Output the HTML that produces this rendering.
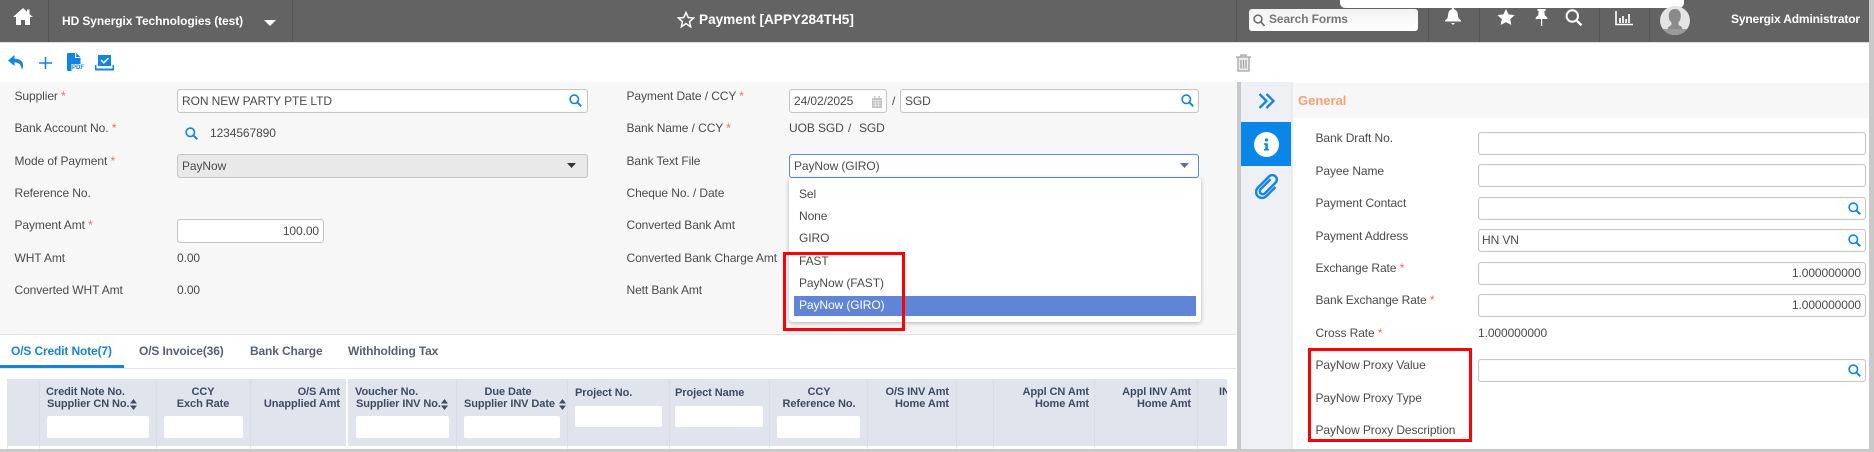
<!DOCTYPE html>
<html><head><meta charset="utf-8"><title>Payment</title>
<style>
html,body{margin:0;padding:0;width:1874px;height:452px;overflow:hidden;background:#fff}
#p{position:relative;width:1874px;height:452px;overflow:hidden;font:12px/14px "Liberation Sans",Arial,sans-serif;color:#4a4a4a;filter:blur(.35px);letter-spacing:-.09px}
#p div,#p svg,#p span.a{position:absolute}
.t{white-space:nowrap;height:14px}
.r{color:#f26a6a}
.i{background:#fff;border:1px solid #c6c6c6;border-radius:3px;box-sizing:border-box;box-shadow:inset 0 0 1px #ddd}
.b{font-weight:bold}
.w{color:#fff;font-weight:bold}
.h{font-weight:bold;font-size:11px;letter-spacing:-.08px;color:#3f4b63;white-space:nowrap;height:14px}
.c{text-align:center;transform:translateX(-50%)}
.e{transform:translateX(-100%)}
.f{background:#fff;border-radius:2px}
.v{background:#d9dde6;width:1px;top:379px;height:67px}
.u{background:#e6e8ee;width:1px;top:446px;height:3px}
.s{width:1px;background:#565656;top:0;height:42px}
.red{border:3px solid #f00;box-sizing:border-box}
</style></head><body><div id="p">

<!-- top bar -->
<div style="left:0;top:0;width:1869px;height:42px;background:#636363"></div>
<div style="left:0;top:42px;width:1869px;height:1px;background:#dcdcdc"></div>
<div class="s" style="left:48px"></div><div class="s" style="left:292px"></div><div class="s" style="left:1236px"></div>
<div class="s" style="left:1428px"></div><div class="s" style="left:1479px"></div><div class="s" style="left:1599px"></div><div class="s" style="left:1649px"></div>

<svg style="left:13px;top:8px" width="20" height="17" viewBox="0 0 20 17"><path d="M10 0L0 9h3v8h5v-5h4v5h5V9h3l-3.500-3V1.500h-2.500v2.300z" fill="#fff"/></svg>
<div class="t w" style="left:62px;top:14px">HD Synergix Technologies (test)</div>
<svg style="left:264px;top:20px" width="12" height="6"><path d="M0 0h12L6 6z" fill="#fff"/></svg>

<svg style="left:677px;top:11px" width="18" height="17" viewBox="0 0 24 23"><path d="M12 2l3 6.800 7.300.7-5.500 4.900 1.600 7.200L12 17l-6.400 4.600 1.600-7.200L1.700 9.500 9 8.800z" fill="none" stroke="#fff" stroke-width="2"/></svg>
<div class="t w" style="left:699px;top:13px;font-size:13.600px;letter-spacing:0">Payment [APPY284TH5]</div>

<div style="left:1340px;top:-5px;width:344px;height:13px;background:#fff;border-radius:5px"></div>
<div style="left:1249px;top:9px;width:169px;height:22px;background:linear-gradient(#f2f2f2,#fff);border-radius:3px"></div>
<svg style="left:1253px;top:14px" width="12" height="13" viewBox="0 0 12 13"><circle cx="5" cy="5" r="3.900" fill="none" stroke="#666" stroke-width="1.500"/><path d="M8 8l3.500 4" stroke="#666" stroke-width="1.700"/></svg>
<div class="t b" style="left:1269px;top:12px;color:#777;letter-spacing:-.1px">Search Forms</div>

<svg style="left:1445px;top:8px" width="16" height="17" viewBox="0 0 16 17"><path d="M8 0c1 0 1.300.6 1.300 1.400C12 2.200 12.800 4.500 13 8c.1 2 1.500 3.500 3 4.500v1H0v-1c1.500-1 2.900-2.500 3-4.500.2-3.500 1-5.800 3.700-6.600C6.700.6 7 0 8 0z" fill="#fff"/><path d="M6 15h4l-2 2z" fill="#fff"/></svg>
<svg style="left:1497px;top:9px" width="18" height="16" viewBox="0 0 18 16"><path d="M9 0l2.600 5.400 6 .7-4.400 4 1.200 5.900L9 13.100 3.600 16l1.200-5.900L.4 6.100l6-.7z" fill="#fff"/></svg>
<svg style="left:1535px;top:9px" width="13" height="17" viewBox="0 0 13 17"><path d="M2.500 0h8v2H9.300l.5 4.500c1.500.8 2.700 2 2.700 3.500H.5c0-1.500 1.200-2.700 2.700-3.500L3.700 2H2.500z" fill="#fff"/><path d="M6 10h1.200v7H6z" fill="#fff"/></svg>
<svg style="left:1565px;top:9px" width="18" height="17" viewBox="0 0 18 17"><circle cx="7.300" cy="7" r="5.700" fill="none" stroke="#fff" stroke-width="2"/><path d="M11.500 11.300l5 5" stroke="#fff" stroke-width="2.400"/></svg>
<svg style="left:1615px;top:11px" width="18" height="15" viewBox="0 0 18 15"><path d="M1 0v13.500h17" fill="none" stroke="#fff" stroke-width="1.600"/><path d="M4 7h2v5H4zM7 5h2v7H7zM10 8h2v4h-2zM13 3h2v9h-2z" fill="#e8e8e8"/></svg>
<svg style="left:1660px;top:6px" width="30" height="29" viewBox="0 0 30 29"><defs><clipPath id="av"><ellipse cx="15" cy="14.500" rx="15" ry="14.500"/></clipPath></defs><ellipse cx="15" cy="14.500" rx="15" ry="14.500" fill="#e4e4e4"/><g clip-path="url(#av)"><path d="M15 3c4 0 5.800 3 5.800 7 0 3-1 5-2.300 6.500v2.500c2 1 3 2 4 3 -1 3-14 3-15 0 1-1 2-2 4-3v-2.500C9.700 15 8.700 13 8.700 10 8.700 6 11 3 15 3z" fill="#8a8a8a"/><path d="M0 23h30v6H0z" fill="#9a9a9a"/></g></svg>
<div class="t w" style="left:1731px;top:12px;letter-spacing:-.15px">Synergix Administrator</div>

<!-- toolbar -->
<svg style="left:7px;top:54px" width="18" height="17" viewBox="0 0 18 17"><path d="M7.500 1L1 6.500 7.500 12V8.400c4 0 6.500 1.500 7.500 7.600 2.500-5.500 1-11-7.500-11.400z" fill="#1383e4"/></svg>
<svg style="left:39px;top:57px" width="13" height="12"><path d="M5.700 0h1.600v5.200H13v1.600H7.300V12H5.700V6.800H0V5.200h5.700z" fill="#1383e4"/></svg>
<svg style="left:67px;top:53px" width="14" height="18" viewBox="0 0 14 18"><path d="M0 1q0-1 1-1h7v5h5.500v6H4.500v7H1q-1 0-1-1z" fill="#1383e4"/><path d="M9.200 0l4.300 4H9.200z" fill="#1383e4"/></svg>
<div class="t" style="left:72px;top:65px;font-size:6px;line-height:7px;height:7px;font-weight:bold;color:#1383e4;letter-spacing:0">PDF</div>
<svg style="left:95px;top:55px" width="19" height="16" viewBox="0 0 19 16"><path d="M3 0h13v11H3z" fill="#1383e4"/><path d="M6 5l2.800 2.800L13.500 3" fill="none" stroke="#fff" stroke-width="1.500"/><path d="M0 10v5.500h19V10h-1.500v3.500h-16V10z" fill="#1383e4"/></svg>
<svg style="left:1236px;top:54px" width="15" height="18" viewBox="0 0 15 18"><path d="M5 2.500V1h5v1.500M0 3h15M2 3.500V17h11V3.500M5 6v8.500M7.500 6v8.500M10 6v8.500" fill="#ececec" stroke="#a4a4a4" stroke-width="1.300"/></svg>

<!-- left form -->
<div style="left:0;top:82px;width:1237px;height:252px;background:#f7f7f7"></div>
<div style="left:0;top:334px;width:1237px;height:1px;background:#e3e3e3"></div>

<div class="t" style="left:14.500px;top:89px">Supplier <span class="r">*</span></div>
<div class="t" style="left:14.500px;top:121px">Bank Account No. <span class="r">*</span></div>
<div class="t" style="left:14.500px;top:154px">Mode of Payment <span class="r">*</span></div>
<div class="t" style="left:14.500px;top:186px">Reference No.</div>
<div class="t" style="left:14.500px;top:218px">Payment Amt <span class="r">*</span></div>
<div class="t" style="left:14.500px;top:251px">WHT Amt</div>
<div class="t" style="left:14.500px;top:283px">Converted WHT Amt</div>

<div class="i" style="left:177px;top:89px;width:411px;height:24px"></div>
<div class="t" style="left:182px;top:94px">RON NEW PARTY PTE LTD</div>
<svg style="left:569px;top:94px" width="13" height="13" viewBox="0 0 13 13"><circle cx="5.300" cy="5.300" r="4.200" fill="none" stroke="#1383e4" stroke-width="1.600"/><path d="M8.300 8.300l4 4" stroke="#1383e4" stroke-width="1.900"/></svg>
<svg style="left:185px;top:127px" width="13" height="13" viewBox="0 0 13 13"><circle cx="5.300" cy="5.300" r="4.200" fill="none" stroke="#1383e4" stroke-width="1.600"/><path d="M8.300 8.300l4 4" stroke="#1383e4" stroke-width="1.900"/></svg>
<div class="t" style="left:210px;top:126px">1234567890</div>

<div class="i" style="left:177px;top:154px;width:411px;height:24px;background:#e9e9e9"></div>
<div class="t" style="left:182px;top:159px">PayNow</div>
<svg style="left:567px;top:163px" width="9" height="5"><path d="M0 0h9L4.500 5z" fill="#333"/></svg>

<div class="i" style="left:177px;top:219px;width:147px;height:24px"></div>
<div class="t e" style="left:319px;top:224px">100.00</div>
<div class="t" style="left:177px;top:251px">0.00</div>
<div class="t" style="left:177px;top:283px">0.00</div>

<div class="t" style="left:626.500px;top:89px">Payment Date / CCY <span class="r">*</span></div>
<div class="t" style="left:626.500px;top:121px">Bank Name / CCY <span class="r">*</span></div>
<div class="t" style="left:626.500px;top:154px">Bank Text File</div>
<div class="t" style="left:626.500px;top:186px">Cheque No. / Date</div>
<div class="t" style="left:626.500px;top:218px">Converted Bank Amt</div>
<div class="t" style="left:626.500px;top:251px">Converted Bank Charge Amt</div>
<div class="t" style="left:626.500px;top:283px">Nett Bank Amt</div>

<div class="i" style="left:789px;top:89px;width:98px;height:24px"></div>
<div class="t" style="left:794px;top:94px">24/02/2025</div>
<svg style="left:872px;top:96px" width="10" height="12" viewBox="0 0 10 12"><path d="M0 2h10v10H0z" fill="#c4c4c4"/><path d="M2 0h1.500v2H2zM6.500 0H8v2H6.500z" fill="#c4c4c4"/><path d="M1 4.500h8M1 7h8M1 9.500h8M3.300 4v7M6.600 4v7" stroke="#e6e6e6" stroke-width=".7"/></svg>
<div class="t" style="left:892px;top:94px">/</div>
<div class="i" style="left:900px;top:89px;width:299px;height:24px"></div>
<div class="t" style="left:905px;top:94px">SGD</div>
<svg style="left:1181px;top:94px" width="13" height="13" viewBox="0 0 13 13"><circle cx="5.300" cy="5.300" r="4.200" fill="none" stroke="#1383e4" stroke-width="1.600"/><path d="M8.300 8.300l4 4" stroke="#1383e4" stroke-width="1.900"/></svg>
<div class="t" style="left:789px;top:121px">UOB SGD</div>
<div class="t" style="left:848px;top:121px">/</div>
<div class="t" style="left:859px;top:121px">SGD</div>

<div class="i" style="left:789px;top:154px;width:410px;height:24px;border-color:#5d8fd2"></div>
<div class="t" style="left:794px;top:159px">PayNow (GIRO)</div>
<svg style="left:1180px;top:163px" width="9" height="5"><path d="M0 0h9L4.500 5z" fill="#57709f"/></svg>

<!-- dropdown -->
<div style="left:789px;top:178px;width:412px;height:144px;background:#fff;border-radius:3px;box-shadow:0 1px 4px rgba(0,0,0,.28)"></div>
<div class="t" style="left:799px;top:187px">Sel</div>
<div class="t" style="left:799px;top:209px">None</div>
<div class="t" style="left:799px;top:231px">GIRO</div>
<div class="t" style="left:799px;top:254px">FAST</div>
<div class="t" style="left:799px;top:276px">PayNow (FAST)</div>
<div style="left:794px;top:296px;width:402px;height:20px;background:#6085d6"></div>
<div class="t" style="left:799px;top:298px;color:#fff">PayNow (GIRO)</div>
<div class="red" style="left:783px;top:252px;width:122px;height:79px"></div>

<!-- tabs -->
<div class="t b" style="left:11px;top:344px;color:#1b82da;letter-spacing:-.14px">O/S Credit Note(7)</div>
<div style="left:0;top:365px;width:124px;height:3px;background:#1383e4"></div>
<div class="t b" style="left:139px;top:344px;color:#596070;letter-spacing:-.14px">O/S Invoice(36)</div>
<div class="t b" style="left:250px;top:344px;color:#596070;letter-spacing:-.14px">Bank Charge</div>
<div class="t b" style="left:348px;top:344px;color:#596070;letter-spacing:-.14px">Withholding Tax</div>
<div style="left:0;top:368px;width:1236px;height:1px;background:#e6e6e6"></div>

<!-- table -->
<div style="left:7px;top:379px;width:1220px;height:67px;background:#e0e4ec"></div>
<div style="left:346px;top:379px;width:2px;height:70px;background:#fff"></div>
<div class="v" style="left:39px"></div><div class="v" style="left:156px"></div><div class="v" style="left:250px"></div><div class="v" style="left:456px"></div><div class="v" style="left:567px"></div><div class="v" style="left:669px"></div><div class="v" style="left:769px"></div><div class="v" style="left:867px"></div><div class="v" style="left:956px"></div><div class="v" style="left:993px"></div><div class="v" style="left:1094px"></div><div class="v" style="left:1197px"></div>
<div class="u" style="left:7px"></div><div class="u" style="left:39px"></div><div class="u" style="left:156px"></div><div class="u" style="left:250px"></div><div class="u" style="left:456px"></div><div class="u" style="left:567px"></div><div class="u" style="left:669px"></div><div class="u" style="left:769px"></div><div class="u" style="left:867px"></div><div class="u" style="left:956px"></div><div class="u" style="left:993px"></div><div class="u" style="left:1094px"></div><div class="u" style="left:1197px"></div>

<div class="h" style="left:46px;top:385px">Credit Note No.</div>
<div class="h" style="left:47px;top:397px">Supplier CN No.</div>
<svg style="left:130px;top:399px" width="7" height="11"><path d="M3.500 0L7 4.500H0zM0 6.500h7L3.500 11z" fill="#3f4b63"/></svg>
<div class="f" style="left:47px;top:416px;width:102px;height:22px"></div>
<div class="h c" style="left:203px;top:385px">CCY</div>
<div class="h c" style="left:203px;top:397px">Exch Rate</div>
<div class="f" style="left:164px;top:416px;width:79px;height:22px"></div>
<div class="h e" style="left:340px;top:385px">O/S Amt</div>
<div class="h e" style="left:340px;top:397px">Unapplied Amt</div>

<div class="h" style="left:355px;top:385px">Voucher No.</div>
<div class="h" style="left:356px;top:397px">Supplier INV No.</div>
<svg style="left:441px;top:399px" width="7" height="11"><path d="M3.500 0L7 4.500H0zM0 6.500h7L3.500 11z" fill="#3f4b63"/></svg>
<div class="f" style="left:356px;top:416px;width:93px;height:22px"></div>
<div class="h c" style="left:508px;top:385px">Due Date</div>
<div class="h" style="left:464px;top:397px">Supplier INV Date</div>
<svg style="left:559px;top:399px" width="7" height="11"><path d="M3.500 0L7 4.500H0zM0 6.500h7L3.500 11z" fill="#3f4b63"/></svg>
<div class="f" style="left:464px;top:416px;width:96px;height:22px"></div>
<div class="h" style="left:575px;top:386px">Project No.</div>
<div class="f" style="left:575px;top:406px;width:87px;height:21px"></div>
<div class="h" style="left:675px;top:386px">Project Name</div>
<div class="f" style="left:675px;top:406px;width:88px;height:21px"></div>
<div class="h c" style="left:819px;top:385px">CCY</div>
<div class="h c" style="left:819px;top:397px">Reference No.</div>
<div class="f" style="left:777px;top:416px;width:83px;height:22px"></div>
<div class="h e" style="left:949px;top:385px">O/S INV Amt</div>
<div class="h e" style="left:949px;top:397px">Home Amt</div>
<div class="h e" style="left:1089px;top:385px">Appl CN Amt</div>
<div class="h e" style="left:1089px;top:397px">Home Amt</div>
<div class="h e" style="left:1191px;top:385px">Appl INV Amt</div>
<div class="h e" style="left:1191px;top:397px">Home Amt</div>
<div style="left:1219px;top:385px;width:8px;height:14px;overflow:hidden"><div class="h" style="left:0;top:0">INV</div></div>

<!-- scrollbar + sidebar -->
<div style="left:1237px;top:82px;width:4px;height:370px;background:#c9c9c9"></div>
<div style="left:1241px;top:82px;width:50px;height:370px;background:#eef0f5"></div>
<div style="left:1291px;top:82px;width:2px;height:370px;background:#ececec"></div>
<div style="left:1241px;top:122px;width:50px;height:44px;background:#0a86e8"></div>
<svg style="left:1258px;top:93px" width="17" height="16" viewBox="0 0 17 16"><path d="M1.500 1l7 7-7 7M8.500 1l7 7-7 7" fill="none" stroke="#1383e4" stroke-width="2.300"/></svg>
<svg style="left:1254px;top:132px" width="25" height="25" viewBox="0 0 25 25"><circle cx="12.500" cy="12.500" r="12.500" fill="#fff"/><circle cx="12.500" cy="8" r="1.600" fill="#0a86e8"/><path d="M10 11.200h3.800v5.800h1.300v1.500H10V17h1.300v-4.300H10z" fill="#0a86e8"/></svg>
<svg style="left:1255px;top:174px" width="24" height="26" viewBox="0 0 24 26"><g transform="translate(12 13) rotate(45) translate(-10 -14)"><path d="M7 6V20a3 3 0 0 0 6 0V5a4.500 4.500 0 0 0-9 0V21a6 6 0 0 0 12 0V8" fill="none" stroke="#1383e4" stroke-width="2.400"/></g></svg>

<!-- right panel -->
<div style="left:1293px;top:83px;width:576px;height:35px;background:#f7f7f7"></div>
<div class="t b" style="left:1298px;top:94px;color:#ff9f73;font-size:13px;letter-spacing:0">General</div>

<div class="t" style="left:1315.500px;top:131px">Bank Draft No.</div>
<div class="t" style="left:1315.500px;top:164px">Payee Name</div>
<div class="t" style="left:1315.500px;top:196px">Payment Contact</div>
<div class="t" style="left:1315.500px;top:229px">Payment Address</div>
<div class="t" style="left:1315.500px;top:261px">Exchange Rate <span class="r">*</span></div>
<div class="t" style="left:1315.500px;top:293px">Bank Exchange Rate <span class="r">*</span></div>
<div class="t" style="left:1315.500px;top:326px">Cross Rate <span class="r">*</span></div>
<div class="t" style="left:1315.500px;top:358px">PayNow Proxy Value</div>
<div class="t" style="left:1315.500px;top:391px">PayNow Proxy Type</div>
<div class="t" style="left:1315.500px;top:423px">PayNow Proxy Description</div>

<div class="i" style="left:1478px;top:132px;width:388px;height:23px"></div>
<div class="i" style="left:1478px;top:164px;width:388px;height:23px"></div>
<div class="i" style="left:1478px;top:197px;width:388px;height:23px"></div>
<div class="i" style="left:1478px;top:229px;width:388px;height:23px"></div>
<div class="i" style="left:1478px;top:262px;width:388px;height:23px"></div>
<div class="i" style="left:1478px;top:294px;width:388px;height:23px"></div>
<div class="i" style="left:1478px;top:359px;width:388px;height:23px"></div>
<svg style="left:1848px;top:202px" width="13" height="13" viewBox="0 0 13 13"><circle cx="5.300" cy="5.300" r="4.200" fill="none" stroke="#1383e4" stroke-width="1.600"/><path d="M8.300 8.300l4 4" stroke="#1383e4" stroke-width="1.900"/></svg>
<svg style="left:1848px;top:234px" width="13" height="13" viewBox="0 0 13 13"><circle cx="5.300" cy="5.300" r="4.200" fill="none" stroke="#1383e4" stroke-width="1.600"/><path d="M8.300 8.300l4 4" stroke="#1383e4" stroke-width="1.900"/></svg>
<svg style="left:1848px;top:364px" width="13" height="13" viewBox="0 0 13 13"><circle cx="5.300" cy="5.300" r="4.200" fill="none" stroke="#1383e4" stroke-width="1.600"/><path d="M8.300 8.300l4 4" stroke="#1383e4" stroke-width="1.900"/></svg>
<div class="t" style="left:1482px;top:233px">HN VN</div>
<div class="t e" style="left:1861px;top:266px">1.000000000</div>
<div class="t e" style="left:1861px;top:298px">1.000000000</div>
<div class="t" style="left:1478px;top:326px">1.000000000</div>
<div class="red" style="left:1308px;top:348px;width:164px;height:94px"></div>

<!-- outer edges -->
<div style="left:1869px;top:0;width:5px;height:452px;background:#c9c9c9"></div>
<div style="left:0;top:449px;width:1874px;height:3px;background:#c9c9c9"></div>
</div></body></html>
